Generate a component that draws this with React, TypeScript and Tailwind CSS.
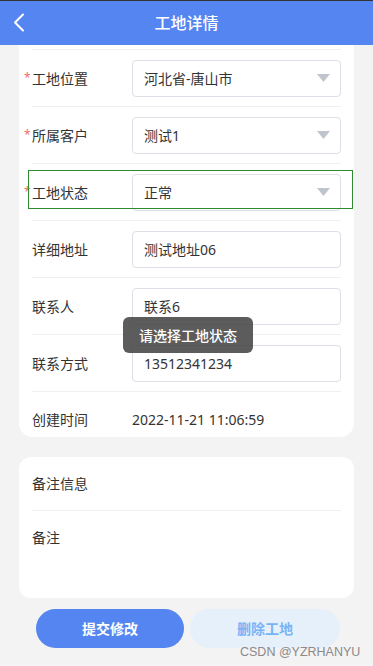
import React from "react";

const font = { fontFamily: '"Noto Sans", "Noto Sans CJK SC", sans-serif' };

function Caret() {
  return (
    <svg width="13" height="8" viewBox="0 0 13 8" className="shrink-0">
      <polygon points="0,0 13,0 6.5,8" fill="#c0c4cc" />
    </svg>
  );
}

function Row({
  label,
  required,
  children,
}: {
  label: string;
  required?: boolean;
  children: React.ReactNode;
}) {
  return (
    <div className="relative flex h-[57px] items-center border-b border-[#efefef]">
      {required && (
        <span className="absolute left-[-8px] top-[22px] text-[12px] leading-none text-[#f56c6c]">*</span>
      )}
      <div className="w-[100px] shrink-0 text-[14px] text-[#333]">{label}</div>
      {children}
    </div>
  );
}

function Box({ text, select }: { text: string; select?: boolean }) {
  return (
    <div className="flex h-[37px] flex-1 items-center justify-between rounded-[4px] border border-[#dcdfe6] bg-white pl-[11px] pr-[10px] text-[14px] text-[#333]">
      <span>{text}</span>
      {select && <Caret />}
    </div>
  );
}

export default function App() {
  return (
    <div className="relative h-[666px] w-[373px] overflow-hidden bg-[#f3f3f3]" style={font}>
      <div className="relative flex h-[45px] items-center justify-center border-t border-[#333] bg-[#5585f0]">
        <svg
          className="absolute left-[13px] top-[12px]"
          width="12"
          height="19"
          viewBox="0 0 12 19"
          fill="none"
          stroke="white"
          strokeWidth="2"
          strokeLinecap="round"
          strokeLinejoin="round"
        >
          <polyline points="10,1.5 2,9.5 10,17.5" />
        </svg>
        <span className="text-[16px] font-medium text-white">工地详情</span>
      </div>

      <div className="mx-[19px] rounded-b-[14px] bg-white px-[13px] pt-[4px]">
        <div className="border-t border-[#efefef]">
          <Row label="工地位置" required>
            <Box text="河北省-唐山市" select />
          </Row>
          <Row label="所属客户" required>
            <Box text="测试1" select />
          </Row>
          <Row label="工地状态" required>
            <Box text="正常" select />
          </Row>
          <Row label="详细地址">
            <Box text="测试地址06" />
          </Row>
          <Row label="联系人">
            <Box text="联系6" />
          </Row>
          <Row label="联系方式">
            <Box text="13512341234" />
          </Row>
          <div className="flex h-[45px] items-center pt-[10px] text-[14px] text-[#333]">
            <div className="w-[100px] shrink-0">创建时间</div>
            <div>2022-11-21 11:06:59</div>
          </div>
        </div>
      </div>

      <div className="mx-[19px] mt-[20px] h-[141px] rounded-[12px] bg-white px-[13px]">
        <div className="flex h-[54px] items-center border-b border-[#efefef] text-[14px] text-[#333]">备注信息</div>
        <div className="flex h-[52px] items-center text-[14px] text-[#333]">备注</div>
      </div>

      <div className="mt-[11px] flex gap-[6px] pl-[36px]">
        <button className="flex h-[39px] w-[148px] items-center justify-center rounded-full bg-[#5585f0] text-[14px] font-bold text-white">
          提交修改
        </button>
        <button className="flex h-[39px] w-[150px] items-center justify-center rounded-full bg-[#e5f0fb] text-[14px] font-bold text-[#79b3f5]">
          删除工地
        </button>
      </div>

      <div
        className="absolute left-[240px] top-[643px] text-[12.5px] text-[#8a8a8a]"
        style={{ fontFamily: '"Liberation Sans", Arial, sans-serif' }}
      >
        CSDN @YZRHANYU
      </div>

      <div className="absolute left-[28px] top-[170px] h-[39px] w-[325px] border border-[#2e8b2e]" />

      <div className="absolute left-[123px] top-[317px] flex h-[36px] w-[130px] items-center justify-center rounded-[6px] bg-[rgba(70,70,70,0.88)] text-[14px] font-medium text-white">
        请选择工地状态
      </div>
    </div>
  );
}
